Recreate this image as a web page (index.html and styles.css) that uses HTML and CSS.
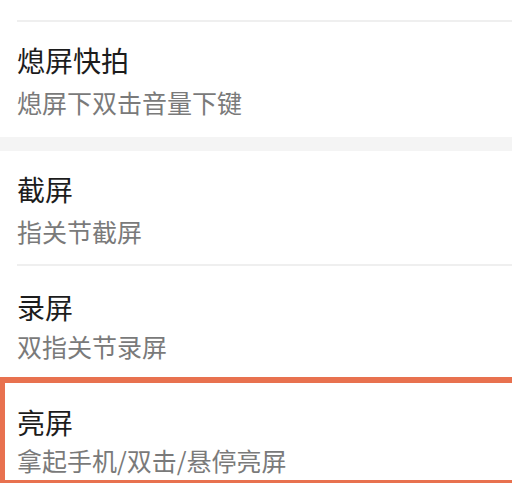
FILE: index.html
```html
<!DOCTYPE html>
<html lang="zh-CN">
  <head>
    <meta charset="UTF-8" />
    <title>快捷手势</title>
    <link rel="stylesheet" href="styles.css">
  </head>
  <body>
    <div class="group">
      <div class="item item-cut">
        <div class="content"></div>
      </div>
      <div class="item">
        <div class="content last">
          <div class="title">熄屏快拍</div>
          <div class="desc">熄屏下双击音量下键</div>
        </div>
      </div>
    </div>

    <div class="gap"></div>

    <div class="group">
      <div class="item">
        <div class="content">
          <div class="title">截屏</div>
          <div class="desc">指关节截屏</div>
        </div>
      </div>
      <div class="item">
        <div class="content last tight">
          <div class="title">录屏</div>
          <div class="desc">双指关节录屏</div>
        </div>
      </div>
      <div class="item highlight">
        <div class="content last">
          <div class="title">亮屏</div>
          <div class="desc">拿起手机/双击/悬停亮屏</div>
        </div>
      </div>
    </div>
  </body>
</html>
```

FILE: styles.css
```css
body {
  margin: 0;
  background: #ffffff;
  font-family: "Noto Sans CJK SC", "Noto Sans", sans-serif;
  overflow: hidden;
}

.group {
  background: #ffffff;
}

.gap {
  height: 14px;
  background: #f4f4f4;
}

.item {
  padding-left: 17px;
}

.content {
  padding: 18px 0 15px;
  border-bottom: 2px solid #efefef;
}

.content.last {
  border-bottom: none;
  padding-bottom: 17px;
}

.content.tight {
  padding: 21px 0 13px;
}

.content.tight .desc {
  margin-top: 1px;
}

.item-cut .content {
  padding: 0;
  height: 20px;
}

.title {
  font-size: 28px;
  line-height: 40px;
  color: #1c1c1c;
}

.desc {
  margin-top: 4px;
  font-size: 25px;
  line-height: 36px;
  color: #7a7a7a;
}

.highlight {
  padding-left: 12px;
  border: 5px solid #e8714f;
  border-top-width: 6px;
  border-right: none;
}

.highlight .content {
  padding: 19px 0 2px;
}

.highlight .desc {
  margin-top: 0;
}
```
